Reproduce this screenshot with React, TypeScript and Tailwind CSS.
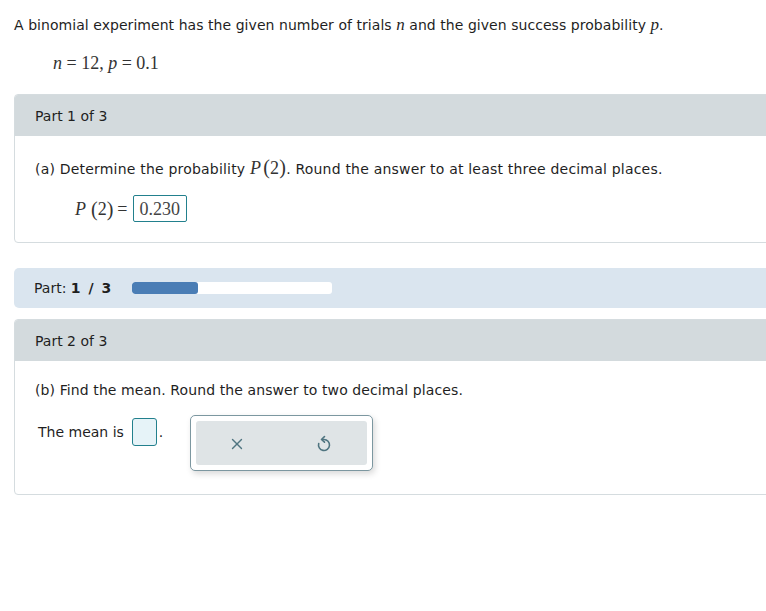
import { X } from "lucide-react";

function Var({ children }: { children: React.ReactNode }) {
  return <i className="font-['Liberation_Serif',serif] text-[17px]">{children}</i>;
}

function Undo() {
  return (
    <svg width="16" height="18" viewBox="0 0 16 18" fill="none" stroke="#4f7480" strokeWidth="1.6" strokeLinecap="round" strokeLinejoin="round">
      <path d="M6.5 4.5 H8 a5.5 5.5 0 1 1 -5.3 4" />
      <path d="M8.5 1.5 L5.5 4.5 L8.5 7.2" />
    </svg>
  );
}

export default function App() {
  return (
    <div className="w-[766px] h-[611px] overflow-hidden bg-white text-[#1f1f1f] font-['DejaVu_Sans',Verdana,sans-serif] text-[14px]">
      <div className="pl-[14px] pt-[14px]">
        <p className="h-[22px] leading-[22px] tracking-[0.05px]">
          A binomial experiment has the given number of trials <Var>n</Var> and the given success probability <Var>p</Var>.
        </p>
        <p className="mt-[16px] pl-[39px] h-[22px] leading-[22px] font-['Liberation_Serif',serif] text-[18px] text-[#333]">
          <i>n</i> = 12, <i>p</i> = 0.1
        </p>

        <section className="mt-[20px] w-[790px] border border-[#d5dcdf] rounded-[4px] overflow-hidden">
          <div className="h-[41px] bg-[#d3dadd] pl-[20px] pt-[1px] flex items-center">Part 1 of 3</div>
          <div className="pl-[20px] pt-[21px] pb-[20px]">
            <p className="h-[24px] leading-[24px] tracking-[0.2px] overflow-visible">
              (a) Determine the probability{" "}
              <span className="font-['Liberation_Serif',serif] text-[18px] leading-none text-[#333]">
                <i>P</i>
                <span className="ml-[2px] text-[20px] leading-none">(</span>2<span className="text-[20px] leading-none">)</span>
              </span>
              . Round the answer to at least three decimal places.
            </p>
            <div className="mt-[14px] h-[27px] pl-[40px] flex items-center leading-none font-['Liberation_Serif',serif] text-[18px] text-[#333]">
              <i>P</i>
              <span className="ml-[5px] text-[20px]">(</span>
              <span>2</span>
              <span className="text-[20px]">)</span>
              <span className="ml-[4px]">=</span>
              <span className="ml-[5px] h-[27px] px-[6px] border border-[#22808d] rounded-[2px] flex items-center text-[#444]">0.230</span>
            </div>
          </div>
        </section>

        <div className="mt-[25px] w-[790px] h-[40px] bg-[#dae5ef] rounded-[5px] pl-[20px] flex items-center">
          <span className="w-[98px]">Part: <b className="tracking-[1.5px]">1 / 3</b></span>
          <div className="w-[200px] h-[12px] bg-white rounded-[3px] overflow-hidden">
            <div className="w-[66px] h-full bg-[#4a7db5] rounded-[3px]" />
          </div>
        </div>

        <section className="mt-[11px] w-[790px] h-[176px] border border-[#d5dcdf] rounded-[4px] overflow-hidden">
          <div className="h-[41px] bg-[#d3dadd] pl-[20px] pt-[1px] flex items-center">Part 2 of 3</div>
          <div className="pl-[20px] pt-[18px]">
            <p className="h-[22px] leading-[22px] tracking-[0.1px]">(b) Find the mean. Round the answer to two decimal places.</p>
            <div className="mt-[15px] pl-[3px] flex items-start">
              <div className="flex items-center h-[30px] mt-[1px]">
                <span>The mean is</span>
                <span className="ml-[8px] w-[25px] h-[28px] bg-[#e6f3f8] border border-[#22808d] rounded-[3px]" />
                <span className="ml-[2px]">.</span>
              </div>
              <div className="ml-[27px] -mt-[1px] w-[183px] h-[56px] border border-[#7c97a0] rounded-[5px] bg-white p-[5px] shadow-[2px_3px_6px_rgba(0,0,0,0.15)]">
                <div className="h-full bg-[#dfe4e6] rounded-[3px] flex items-center justify-around pt-[2px]">
                  <X className="w-[18px] h-[18px] text-[#4f7480] -ml-[4px]" strokeWidth={1.8} />
                  <Undo />
                </div>
              </div>
            </div>
          </div>
        </section>
      </div>
    </div>
  );
}
